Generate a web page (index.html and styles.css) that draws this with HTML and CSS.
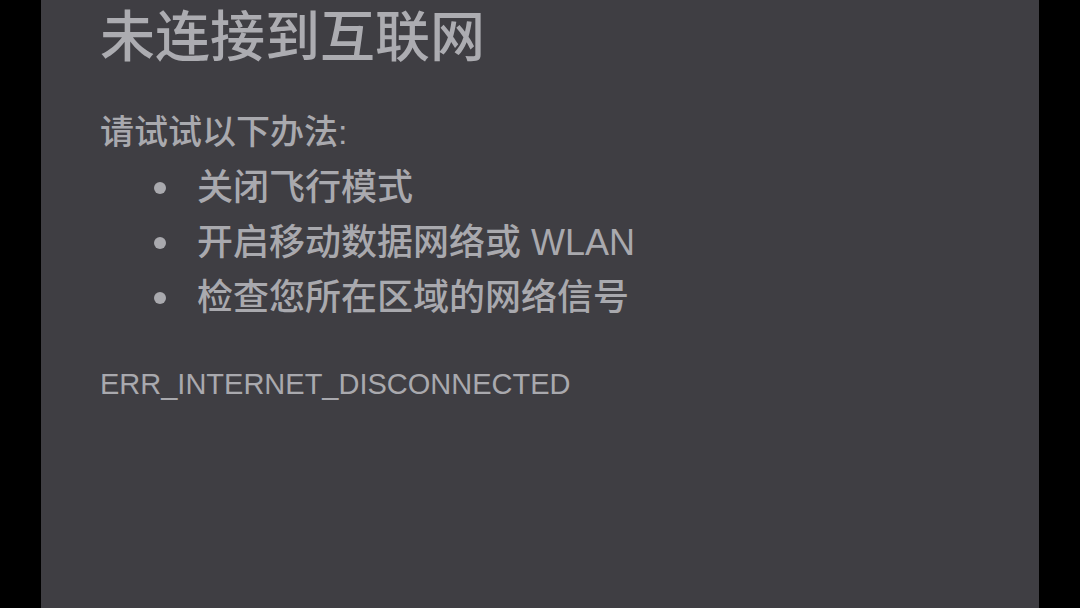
FILE: index.html
```html
<!DOCTYPE html>
<html lang="zh-CN">
  <head>
    <meta charset="UTF-8" />
    <meta name="viewport" content="width=device-width, initial-scale=1.0" />
    <title>未连接到互联网</title>
    <link rel="stylesheet" href="styles.css">
  </head>
  <body>
    <div class="error-page">
      <h1 class="error-title">未连接到互联网</h1>
      <p class="hint">请试试以下办法:</p>
      <ul class="suggestions">
        <li>关闭飞行模式</li>
        <li>开启移动数据网络或 WLAN</li>
        <li>检查您所在区域的网络信号</li>
      </ul>
      <div class="error-code">ERR_INTERNET_DISCONNECTED</div>
    </div>
  </body>
</html>
```

FILE: styles.css
```css
/* General Styles */
body {
  margin: 0;
  background-color: #000;
  font-family: "Liberation Sans", "Noto Sans CJK SC", sans-serif;
  overflow: hidden;
}

.error-page {
  box-sizing: border-box;
  width: 998px;
  height: 608px;
  margin: 0 0 0 41px;
  padding: 4px 0 0 59px;
  background-color: #3f3e43;
  color: #a9a9ae;
}

.error-title {
  margin: 0;
  font-size: 55px;
  line-height: 66px;
  font-weight: 500;
  color: #acacb1;
}

.hint {
  margin: 35px 0 0;
  font-size: 34px;
  line-height: 55px;
  font-weight: 500;
}

/* Suggestion list with round bullets */
.suggestions {
  list-style: none;
  margin: 0;
  padding: 0;
  font-size: 36px;
  line-height: 55px;
  font-weight: 500;
}

.suggestions li {
  display: flex;
  align-items: center;
}

.suggestions li::before {
  content: "";
  width: 12px;
  height: 12px;
  border-radius: 50%;
  background-color: #a9a9ae;
  margin: 0 31px 0 54px;
  flex-shrink: 0;
}

.error-code {
  margin-top: 39px;
  font-size: 29px;
  line-height: 40px;
}
```
